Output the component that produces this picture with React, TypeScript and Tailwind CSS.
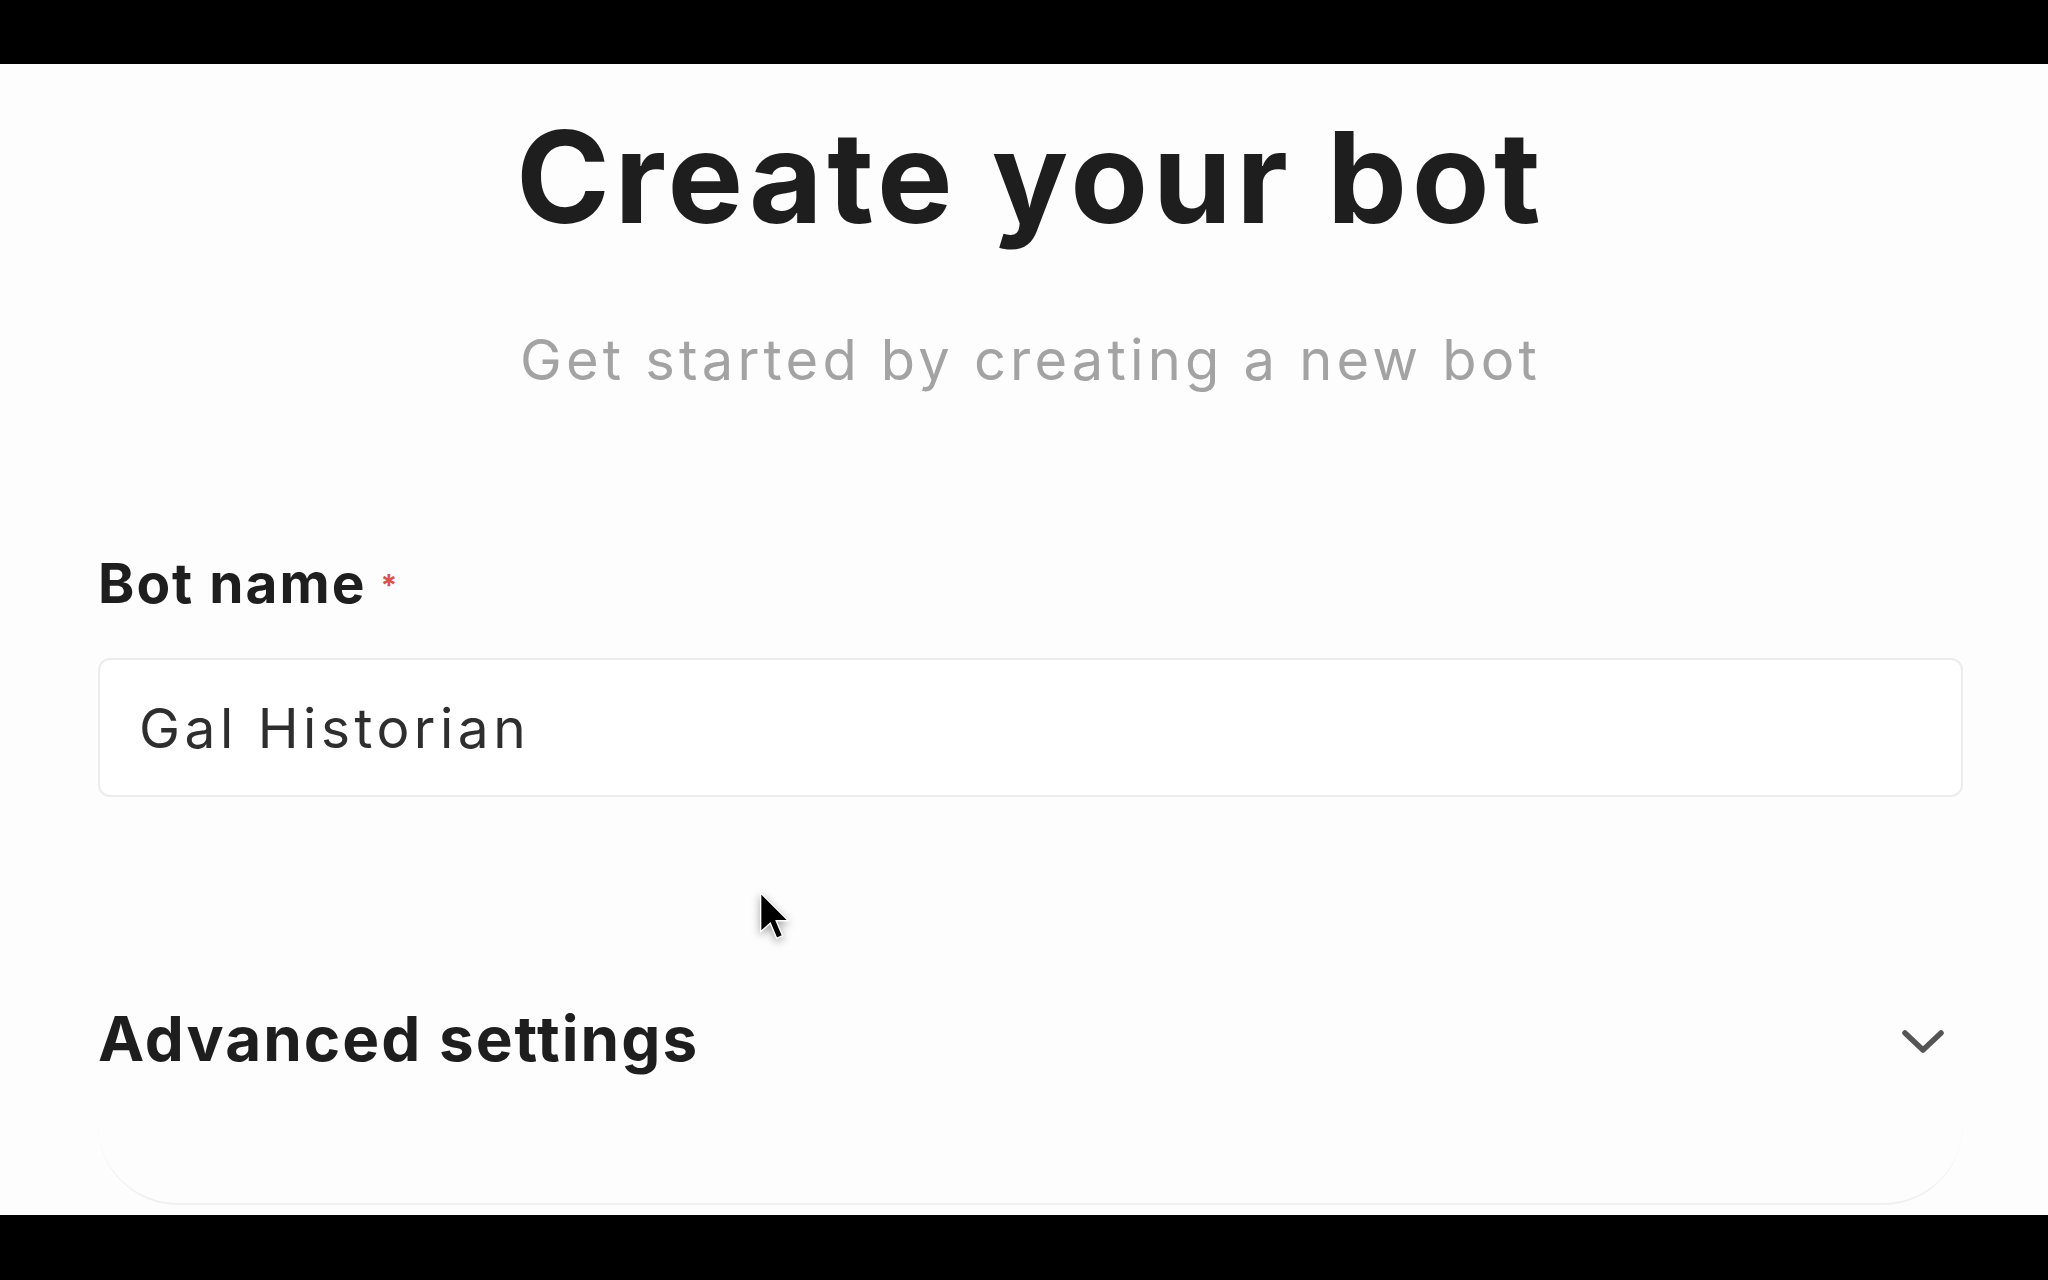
import { useState } from 'react'

function Cursor() {
  return (
    <svg
      className="absolute left-[758px] top-[890px] drop-shadow-[0_3px_4px_rgba(0,0,0,0.35)]"
      width="32"
      height="54"
      viewBox="0 0 12 20"
    >
      <path d="M1 1 L1 15.5 L4.6 12.3 L7 18 L9.2 17 L6.8 11.4 L11.4 11.4 Z" fill="#000" stroke="#fff" strokeWidth="0.5" />
    </svg>
  )
}

export default function App() {
  const [name, setName] = useState('Gal Historian')

  return (
    <div className="relative flex h-screen flex-col bg-black font-['Inter','Liberation_Sans',sans-serif]">
      <div className="h-[64px] shrink-0 bg-black" />

      <div className="flex flex-1 flex-col bg-[#fdfdfd] pl-[98px] pr-[85px]">
        <div className="flex flex-col items-center pt-[50px]">
          <h1 className="text-[127px] leading-none font-bold tracking-[4.5px] text-[#1e1e1e]">Create your bot</h1>
          <p className="mt-[91px] text-[56px] leading-none tracking-[4.2px] text-[#a3a3a3]">
            Get started by creating a new bot
          </p>
        </div>

        <div className="flex flex-col rounded-b-[80px] border-b-2 border-[#f0f0f0] pb-[133px]">
          <label className="mt-[168px] flex items-start text-[55px] leading-none font-bold tracking-[2px] text-[#1e1e1e]">
            Bot name
            <span className="ml-[14px] mt-[14px] text-[30px] leading-none font-bold text-[#d9534f]">*</span>
          </label>

          <input
            value={name}
            onChange={(e) => setName(e.target.value)}
            className="mt-[47px] h-[139px] w-full rounded-[12px] border-2 border-[#ececec] bg-white px-[39px] text-[55px] tracking-[4.5px] text-[#2e2e2e] outline-none"
          />

          <div className="mt-[211px] flex items-center justify-between">
            <h2 className="text-[62px] leading-none font-bold tracking-[2px] text-[#1e1e1e]">Advanced settings</h2>
            <svg className="mr-[18px] mt-[6px]" width="44" height="26" viewBox="0 0 44 26" fill="none">
              <path d="M4 4 L22 21 L40 4" stroke="#555" strokeWidth="5.5" strokeLinecap="round" strokeLinejoin="round" />
            </svg>
          </div>
        </div>
      </div>

      <div className="h-[65px] shrink-0 bg-black" />
      <Cursor />
    </div>
  )
}
